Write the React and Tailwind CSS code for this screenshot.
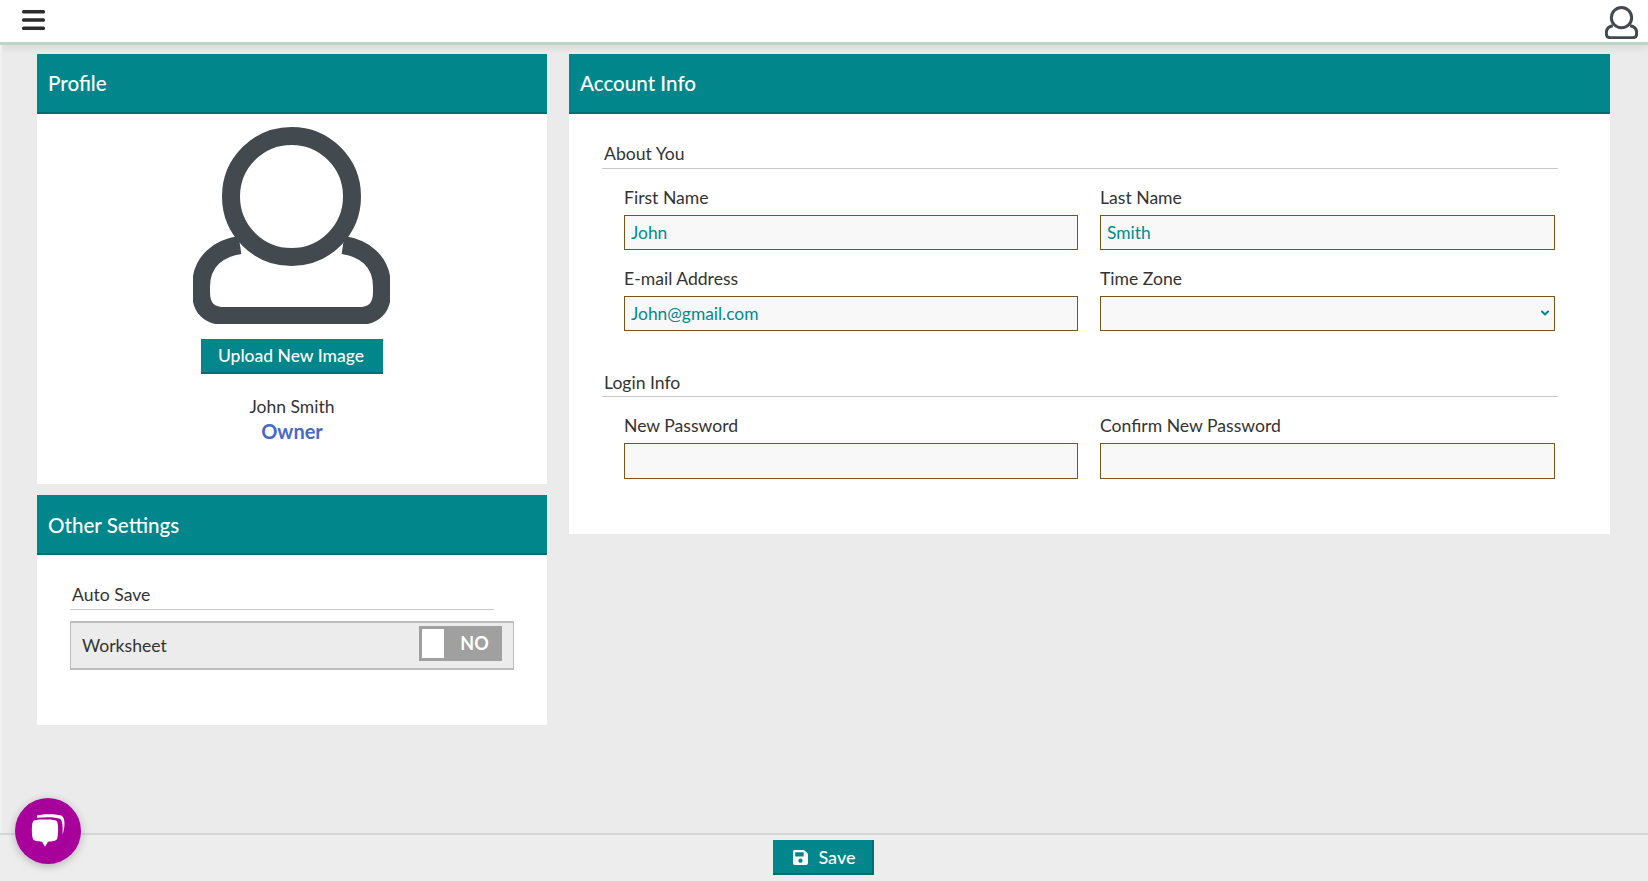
import React from "react";
import { ChevronDown } from "lucide-react";
import { FaSave } from "react-icons/fa";

const lato = "font-['Lato',sans-serif]";

function UserGlyph({ className }) {
  return (
    <svg viewBox="0 0 197 197" className={className} fill="none" stroke="#42494f" strokeWidth="18">
      <circle cx="98.5" cy="69.5" r="60.5" />
      <path d="M47 118 C27 121 8 133 8 160 L8 165 Q8 189 32 189 L165 189 Q189 189 189 165 L189 160 C189 133 170 121 150 118" />
    </svg>
  );
}

function Card({ title, children, className, titleClass = "pt-[1px]" }) {
  return (
    <section className={`bg-white ${className}`}>
      <h2 className={`h-[60px] bg-[#00868b] border-b-2 border-[#006f73] pl-[11px] flex items-center text-[20.6px] text-white font-medium ${titleClass}`}>
        {title}
      </h2>
      {children}
    </section>
  );
}

function SectionTitle({ children, className }) {
  return (
    <div className={`ml-[33px] border-b border-[#c8c8c8] pl-[2px] pt-[1px] pb-[2px] leading-[24px] text-[17.6px] text-[#333] ${className}`}>
      {children}
    </div>
  );
}

function Field({ label, value, h = "h-[35px]" }) {
  return (
    <label className="block">
      <span className="block leading-[24px] mb-[5px] text-[17.6px] text-[#333]">{label}</span>
      <input
        readOnly
        value={value}
        className={`block w-full ${h} bg-[#f8f8f8] border border-[#7a5515] px-[6px] text-[17.4px] text-[#008a8f] outline-none`}
      />
    </label>
  );
}

export default function App() {
  return (
    <div className={`${lato} relative h-[881px] w-[1648px] overflow-hidden bg-[#ebebeb] flex flex-col`}>
      <header className="h-[45px] shrink-0 bg-white border-b-[3px] border-[#bcd6c3] shadow-[0_3px_8px_rgba(0,0,0,0.08)] flex items-center justify-between pl-[22px] pr-[10px]">
        <svg viewBox="0 0 23 20" className="w-[23px] h-[20px] -mt-[2px]" fill="#2b2b2b">
          <rect x="0" y="0" width="23" height="3.4" rx="1.5" />
          <rect x="0" y="8.3" width="23" height="3.4" rx="1.5" />
          <rect x="0" y="16.6" width="23" height="3.4" rx="1.5" />
        </svg>
        <UserGlyph className="w-[33px] h-[33px] mt-[3px]" />
      </header>

      <main className="flex-1 flex items-start gap-[22px] pl-[35px] pt-[9px] border-l-2 border-[#f1f1f1]">
        <div className="w-[510px] flex flex-col gap-[11px]">
          <Card title="Profile">
            <div className="flex flex-col items-center pt-[13px] pb-[39px]">
              <UserGlyph className="w-[197px] h-[197px] mr-[2px]" />
              <button className="mt-[15px] w-[182px] h-[35px] pt-[2px] pr-[2px] bg-[#00868b] border-b-2 border-[#006f73] text-white text-[17.5px] font-medium">
                Upload New Image
              </button>
              <div className="mt-[21px] leading-[24px] text-[17.5px] text-[#333]">John Smith</div>
              <div className="leading-[24px] pb-[2px] text-[20px] font-bold text-[#4a68c8]">Owner</div>
            </div>
          </Card>
          <Card title="Other Settings" titleClass="pt-[3px]">
            <div className="pt-[27px] pb-[55px]">
              <SectionTitle className="w-[424px]">Auto Save</SectionTitle>
              <div className="ml-[33px] mt-[11px] w-[444px] h-[49px] bg-[#ececec] border-x border-y-2 border-[#bdbdbd] flex items-center justify-between pl-[11px] pr-[11px]">
                <span className="pt-[2px] text-[17.6px] text-[#333]">Worksheet</span>
                <div className="w-[83px] h-[35px] -mt-[4px] bg-[#a0a0a0] flex items-center p-[3px]">
                  <div className="w-[22px] h-[29px] bg-white" />
                  <span className="flex-1 text-center pl-[6px] text-white font-bold text-[18px]">NO</span>
                </div>
              </div>
            </div>
          </Card>
        </div>

        <Card title="Account Info" className="w-[1041px]">
          <div className="pt-[27px] pb-[55px]">
            <SectionTitle className="w-[956px]">About You</SectionTitle>
            <div className="ml-[55px] mt-[17px] w-[931px] grid grid-cols-[454px_455px] gap-x-[22px] gap-y-[17px]">
              <Field label="First Name" value="John" />
              <Field label="Last Name" value="Smith" />
              <Field label="E-mail Address" value="John@gmail.com" />
              <label className="block">
                <span className="block leading-[24px] mb-[5px] text-[17.6px] text-[#333]">Time Zone</span>
                <div className="relative">
                  <select className="block w-full h-[35px] appearance-none bg-[#f8f8f8] border border-[#7a5515] px-[6px] text-[17.4px] text-[#008a8f] outline-none" />
                  <ChevronDown size={12} strokeWidth={4} className="absolute right-[4px] top-[11px] text-[#008a8f] pointer-events-none" />
                </div>
              </label>
            </div>
            <SectionTitle className="w-[956px] mt-[39px] !pb-[1px]">Login Info</SectionTitle>
            <div className="ml-[55px] mt-[17px] w-[931px] grid grid-cols-[454px_455px] gap-x-[22px]">
              <Field label="New Password" value="" h="h-[36px]" />
              <Field label="Confirm New Password" value="" h="h-[36px]" />
            </div>
          </div>
        </Card>
      </main>

      <footer className="h-[48px] shrink-0 bg-[#ededed] border-t-2 border-[#d6d6d6] flex justify-center pt-[5px] pr-[2px]">
        <button className="w-[101px] h-[35px] pt-[1px] pl-[4px] bg-[#00868b] border-b-2 border-r-2 border-[#006f73] flex items-center justify-center gap-[9px] text-white text-[18px] font-medium">
          <FaSave size={17} />
          Save
        </button>
      </footer>

      <div className="absolute left-[15px] top-[798px] w-[66px] h-[66px] rounded-full bg-[#a8009a] shadow-[0_2px_8px_rgba(0,0,0,0.25)]">
        <svg viewBox="0 0 66 66" className="w-[66px] h-[66px]" fill="#fff">
          <path d="M22 17.5 C30 15.5 44 16 47 18 C50.5 20.5 50 30 47.5 36.5 C48 29 47.5 22.5 45 20.8 C41 18.8 30 18.8 22 19.8 Z" />
          <path d="M30 21.5 C38 21.5 41 22 42 23.5 C43.5 26 43.5 38 42 41 C41 43 37 43.5 33 43.7 L30 48.7 L27 43.7 C23 43.5 19 43 18 41 C16.5 38 16.5 26 18 23.5 C19 22 22 21.5 30 21.5 Z" />
        </svg>
      </div>
    </div>
  );
}
